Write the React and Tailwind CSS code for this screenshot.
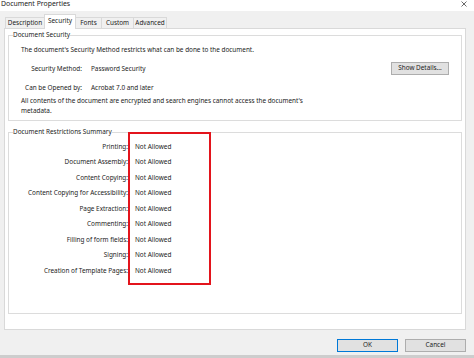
import React from 'react'

const restrictions = [
  'Printing:',
  'Document Assembly:',
  'Content Copying:',
  'Content Copying for Accessibility:',
  'Page Extraction:',
  'Commenting:',
  'Filling of form fields:',
  'Signing:',
  'Creation of Template Pages:',
]

const tabs = [
  { label: 'Description', w: 'w-[39px]', cls: 'border-l border-t' },
  { label: 'Security', w: 'w-[32px]', selected: true },
  { label: 'Fonts', w: 'w-[25px]', cls: 'border-t' },
  { label: 'Custom', w: 'w-[32px]', cls: 'border-l border-t' },
  { label: 'Advanced', w: 'w-[34px]', cls: 'border-l border-t border-r' },
]

export default function App() {
  return (
    <div className="relative flex h-[358px] w-[474px] flex-col overflow-hidden bg-[#f0f0f0] font-['Noto_Sans','Open_Sans',sans-serif] text-[6.4px] text-[#1b1b1b]">
      {/* Title bar */}
      <div className="flex h-[11px] items-start justify-between bg-white">
        <span className="pl-[1px] text-[6.9px] leading-[8px]">Document Properties</span>
        <svg className="mr-[7px] mt-[1px]" width="6" height="6" viewBox="0 0 6 6">
          <path d="M0.5 0.5 L5.5 5.5 M5.5 0.5 L0.5 5.5" stroke="#444" strokeWidth="0.8" />
        </svg>
      </div>

      {/* Tabs */}
      <div className="mt-[3px] flex h-[14px] items-end pl-[5px]">
        {tabs.map((t) =>
          t.selected ? (
            <div
              key={t.label}
              className={`${t.w} relative z-10 -mb-px flex h-[15px] items-center justify-center border border-b-0 border-[#d9d9d9] bg-white pb-[2px] leading-none`}
            >
              {t.label}
            </div>
          ) : (
            <div
              key={t.label}
              className={`${t.w} ${t.cls} flex h-[11px] items-center justify-center border-[#d9d9d9] bg-[#f0f0f0] leading-none`}
            >
              {t.label}
            </div>
          )
        )}
      </div>

      {/* Tab panel */}
      <div className="ml-[4px] h-[302px] w-[462px] border border-[#d9d9d9] bg-white px-[3px]">
        <fieldset className="mt-[2px] h-[90px] border border-[#dcdcdc] px-[4px]">
          <legend className="leading-[8px]">Document Security</legend>
          <div className="mt-[6px] pl-[8px] leading-[10px]">
            The document&apos;s Security Method restricts what can be done to the document.
          </div>
          <div className="mt-[7px] flex h-[13px] items-center">
            <span className="w-[69px] text-right">Security Method:</span>
            <span className="ml-[9px]">Password Security</span>
            <button className="ml-auto mr-[8px] h-[13px] w-[58px] border border-[#adadad] bg-[#e1e1e1] leading-none">
              Show Details...
            </button>
          </div>
          <div className="mt-[8px] flex h-[10px] items-center">
            <span className="w-[69px] text-right">Can be Opened by:</span>
            <span className="ml-[9px]">Acrobat 7.0 and later</span>
          </div>
          <div className="mt-[3px] pl-[8px] leading-[10px]">
            All contents of the document are encrypted and search engines cannot access the document&apos;s
            <br />
            metadata.
          </div>
        </fieldset>

        <fieldset className="mt-[7px] h-[186px] border border-[#dcdcdc] px-[4px]">
          <legend className="leading-[8px]">Document Restrictions Summary</legend>
          <div className="mt-[3px] flex flex-col">
            {restrictions.map((r) => (
              <div key={r} className="flex h-[15.5px] items-center">
                <span className="w-[115px] text-right">{r}</span>
                <span className="ml-[7px]">Not Allowed</span>
              </div>
            ))}
          </div>
        </fieldset>
      </div>

      {/* Dialog buttons */}
      <div className="mt-[9px] flex justify-end gap-[7px] pr-[8px]">
        <button className="h-[13px] w-[61px] border border-[#0078d7] bg-[#e1e1e1] leading-none">OK</button>
        <button className="h-[13px] w-[61px] border border-[#adadad] bg-[#e1e1e1] leading-none">Cancel</button>
      </div>

      <div className="mt-auto h-[3px] bg-[#cdcdcd]" />

      {/* Red highlight annotation over the values column */}
      <div className="pointer-events-none absolute left-[128px] top-[132px] h-[153px] w-[83px] border-2 border-[#e3141c]" />
    </div>
  )
}
